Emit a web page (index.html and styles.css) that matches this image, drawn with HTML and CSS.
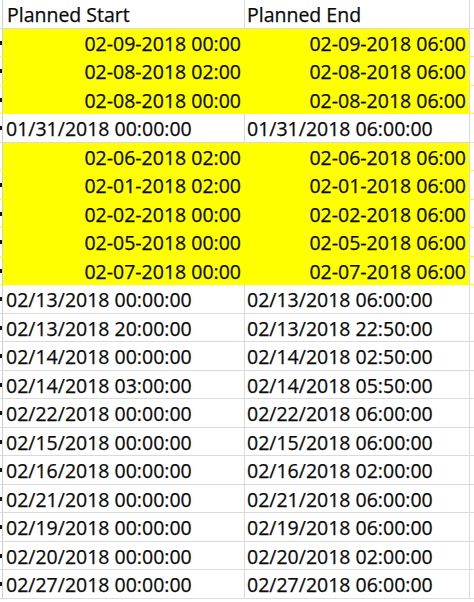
FILE: index.html
```html
<!DOCTYPE html>
<html>
<head>
<meta charset="utf-8">
<link rel="stylesheet" href="styles.css">
</head>
<body>
<div class="sheet">
  <div class="row head"><span class="edge"></span><div class="cell a">Planned Start</div><div class="cell b">Planned End</div></div>
  <div class="row hl"><span class="edge mark"></span><div class="cell a">02-09-2018 00:00</div><div class="cell b">02-09-2018 06:00</div></div>
  <div class="row hl"><span class="edge mark"></span><div class="cell a">02-08-2018 02:00</div><div class="cell b">02-08-2018 06:00</div></div>
  <div class="row hl"><span class="edge mark"></span><div class="cell a">02-08-2018 00:00</div><div class="cell b">02-08-2018 06:00</div></div>
  <div class="row"><span class="edge mark"></span><div class="cell a">01/31/2018 00:00:00</div><div class="cell b">01/31/2018 06:00:00</div></div>
  <div class="row hl"><span class="edge"></span><div class="cell a">02-06-2018 02:00</div><div class="cell b">02-06-2018 06:00</div></div>
  <div class="row hl"><span class="edge mark"></span><div class="cell a">02-01-2018 02:00</div><div class="cell b">02-01-2018 06:00</div></div>
  <div class="row hl"><span class="edge mark"></span><div class="cell a">02-02-2018 00:00</div><div class="cell b">02-02-2018 06:00</div></div>
  <div class="row hl"><span class="edge mark"></span><div class="cell a">02-05-2018 00:00</div><div class="cell b">02-05-2018 06:00</div></div>
  <div class="row hl"><span class="edge mark"></span><div class="cell a">02-07-2018 00:00</div><div class="cell b">02-07-2018 06:00</div></div>
  <div class="row"><span class="edge mark"></span><div class="cell a">02/13/2018 00:00:00</div><div class="cell b">02/13/2018 06:00:00</div></div>
  <div class="row"><span class="edge mark"></span><div class="cell a">02/13/2018 20:00:00</div><div class="cell b">02/13/2018 22:50:00</div></div>
  <div class="row"><span class="edge mark"></span><div class="cell a">02/14/2018 00:00:00</div><div class="cell b">02/14/2018 02:50:00</div></div>
  <div class="row"><span class="edge mark"></span><div class="cell a">02/14/2018 03:00:00</div><div class="cell b">02/14/2018 05:50:00</div></div>
  <div class="row"><span class="edge mark"></span><div class="cell a">02/22/2018 00:00:00</div><div class="cell b">02/22/2018 06:00:00</div></div>
  <div class="row"><span class="edge mark"></span><div class="cell a">02/15/2018 00:00:00</div><div class="cell b">02/15/2018 06:00:00</div></div>
  <div class="row"><span class="edge mark"></span><div class="cell a">02/16/2018 00:00:00</div><div class="cell b">02/16/2018 02:00:00</div></div>
  <div class="row"><span class="edge mark"></span><div class="cell a">02/21/2018 00:00:00</div><div class="cell b">02/21/2018 06:00:00</div></div>
  <div class="row"><span class="edge mark"></span><div class="cell a">02/19/2018 00:00:00</div><div class="cell b">02/19/2018 06:00:00</div></div>
  <div class="row"><span class="edge mark"></span><div class="cell a">02/20/2018 00:00:00</div><div class="cell b">02/20/2018 02:00:00</div></div>
  <div class="row"><span class="edge mark"></span><div class="cell a">02/27/2018 00:00:00</div><div class="cell b">02/27/2018 06:00:00</div></div>
</div>
</body>
</html>
```
FILE: styles.css
```css
html, body {
  margin: 0;
  padding: 0;
  background: #ffffff;
}
body {
  font-family: "Open Sans", "Liberation Sans", sans-serif;
  font-size: 19.5px;
  color: #0a0a0a;
  -webkit-text-stroke: 0.25px #0a0a0a;
  overflow: hidden;
}
.sheet {
  display: flex;
  flex-direction: column;
  width: 474px;
}
.row {
  display: flex;
  height: 28.5px;
  box-sizing: border-box;
  border-bottom: 1px solid #dadada;
}
.edge {
  position: relative;
  width: 2px;
  flex: none;
  border-right: 1px solid #c8d0d8;
}
.edge.mark::before {
  content: "";
  position: absolute;
  left: 0;
  top: 12px;
  width: 2px;
  height: 4px;
  background: #111;
}
.cell {
  flex: none;
  box-sizing: border-box;
  display: flex;
  align-items: center;
  white-space: nowrap;
  line-height: 1;
  border-right: 1px solid #dadada;
  padding-top: 2px;
}
.cell.a {
  width: 242px;
  padding-left: 3px;
}
.cell.b {
  width: 225px;
  padding-left: 2px;
}
.head .cell.a {
  padding-left: 4px;
}
.hl {
  border-bottom-color: #ffff00;
}
.hl .cell {
  background: #ffff00;
  justify-content: flex-end;
  padding-left: 0;
  padding-right: 3px;
  border-right-color: #ffff00;
}
.hl .cell.b {
  border-right-color: #dadada;
}
```
